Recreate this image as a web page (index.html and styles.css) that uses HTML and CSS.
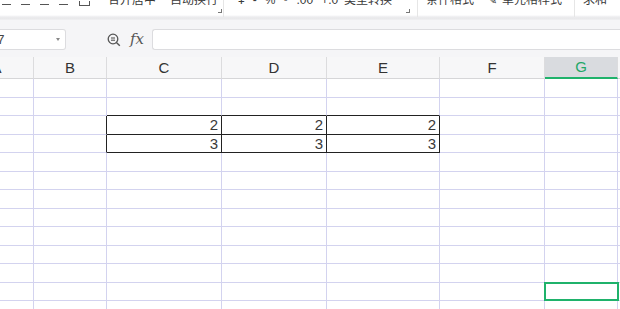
FILE: index.html
```html
<!DOCTYPE html>
<html lang="zh-CN">
<head>
    <meta charset="UTF-8">
    <title>表格</title>
    <link rel="stylesheet" href="styles.css">
</head>
<body>
    <!-- Ribbon (scrolled, only the bottom of it shows) -->
    <div class="ribbon">
        <div class="rb-group rb-align">
            <span class="bar"></span><span class="bar"></span><span class="bar"></span><span class="bar"></span>
            <span class="box-ico"></span>
        </div>
        <div class="rb-item w-merge">合并居中</div>
        <div class="rb-item w-wrap">自动换行<span class="corner"></span></div>
        <div class="rb-sep"></div>
        <div class="rb-item w-num"><span>¥</span><span>-</span><span>%</span><span>⁹</span><span>.00</span><span>+.0</span></div>
        <div class="rb-item w-conv">类型转换<span class="corner"></span></div>
        <div class="rb-sep"></div>
        <div class="rb-item w-cond">条件格式</div>
        <div class="rb-item w-style"><span class="brush">✎</span>单元格样式</div>
        <div class="rb-sep"></div>
        <div class="rb-item w-sum">求和</div>
    </div>

    <!-- Formula bar -->
    <div class="formula-bar">
        <div class="name-box">
            <span class="name-text">G27</span>
            <span class="caret"></span>
        </div>
        <div class="fb-tools">
            <svg class="zoom-ico" width="14" height="14" viewBox="0 0 14 14">
                <circle cx="6" cy="6" r="4.8" fill="none" stroke="#555" stroke-width="1.3"/>
                <line x1="9.4" y1="9.4" x2="12.8" y2="12.8" stroke="#555" stroke-width="1.4"/>
                <line x1="4" y1="5" x2="8" y2="5" stroke="#555" stroke-width="1.1"/>
                <line x1="4" y1="7.2" x2="8" y2="7.2" stroke="#555" stroke-width="1.1"/>
            </svg>
            <span class="fx">fx</span>
        </div>
        <div class="formula-input"></div>
    </div>

    <!-- Sheet -->
    <div class="sheet">
        <div class="hd">A</div><div class="hd">B</div><div class="hd">C</div><div class="hd">D</div><div class="hd">E</div><div class="hd">F</div><div class="hd sel">G</div><div class="hd"></div>

        <div class="c"></div><div class="c"></div><div class="c"></div><div class="c"></div><div class="c"></div><div class="c"></div><div class="c"></div><div class="c"></div>
        <div class="c"></div><div class="c"></div><div class="c bb"></div><div class="c bb"></div><div class="c bb"></div><div class="c"></div><div class="c"></div><div class="c"></div>
        <div class="c"></div><div class="c br"></div><div class="c box">2</div><div class="c box">2</div><div class="c box">2</div><div class="c"></div><div class="c"></div><div class="c"></div>
        <div class="c"></div><div class="c br"></div><div class="c box">3</div><div class="c box">3</div><div class="c box">3</div><div class="c"></div><div class="c"></div><div class="c"></div>
        <div class="c"></div><div class="c"></div><div class="c"></div><div class="c"></div><div class="c"></div><div class="c"></div><div class="c"></div><div class="c"></div>
        <div class="c"></div><div class="c"></div><div class="c"></div><div class="c"></div><div class="c"></div><div class="c"></div><div class="c"></div><div class="c"></div>
        <div class="c"></div><div class="c"></div><div class="c"></div><div class="c"></div><div class="c"></div><div class="c"></div><div class="c"></div><div class="c"></div>
        <div class="c"></div><div class="c"></div><div class="c"></div><div class="c"></div><div class="c"></div><div class="c"></div><div class="c"></div><div class="c"></div>
        <div class="c"></div><div class="c"></div><div class="c"></div><div class="c"></div><div class="c"></div><div class="c"></div><div class="c"></div><div class="c"></div>
        <div class="c"></div><div class="c"></div><div class="c"></div><div class="c"></div><div class="c"></div><div class="c"></div><div class="c"></div><div class="c"></div>
        <div class="c"></div><div class="c"></div><div class="c"></div><div class="c"></div><div class="c"></div><div class="c"></div><div class="c"></div><div class="c"></div>
        <div class="c"></div><div class="c"></div><div class="c"></div><div class="c"></div><div class="c"></div><div class="c"></div><div class="c active"></div><div class="c"></div>
        <div class="c"></div><div class="c"></div><div class="c"></div><div class="c"></div><div class="c"></div><div class="c"></div><div class="c"></div><div class="c"></div>
    </div>
</body>
</html>
```

FILE: styles.css
```css
* {
    box-sizing: border-box;
}

body {
    margin: 0;
    width: 620px;
    height: 309px;
    overflow: hidden;
    background: #ffffff;
    font-family: "Liberation Sans", "Noto Sans CJK SC", sans-serif;
    color: #333;
}

/* ribbon */
.ribbon {
    height: 20px;
    display: flex;
    align-items: flex-start;
    overflow: hidden;
    background: linear-gradient(#ffffff 0, #ffffff 15px, #ececee 17px, #e9e9eb 19px, #f3f3f5 20px);
}

.rb-group,
.rb-item {
    flex: none;
    margin-top: -6px;
    height: 12px;
    font-size: 12px;
    line-height: 12px;
    white-space: nowrap;
    position: relative;
    color: #3a3a3a;
}

.rb-align {
    display: flex;
    align-items: flex-end;
    gap: 10px;
    width: 108px;
    padding-left: 2px;
    margin-top: 0;
    height: 6px;
}

.bar {
    width: 9px;
    height: 1px;
    background: #555;
    margin-bottom: 1px;
}

.box-ico {
    width: 11px;
    height: 5px;
    border: 1px solid #555;
    border-top: none;
    margin-left: 1px;
}

.w-merge { width: 62px; }
.w-wrap { width: 52px; }
.w-num {
    width: 119px;
    padding-left: 13px;
    display: flex;
    gap: 8px;
    overflow: hidden;
}
.w-conv { width: 72px; }
.w-cond { width: 60px; padding-left: 7px; }
.w-style { width: 94px; padding-left: 9px; }
.w-sum { padding-left: 7px; }

.brush {
    font-size: 11px;
    margin-right: 5px;
}

.corner {
    position: absolute;
    right: 0;
    top: 15px;
    width: 4px;
    height: 4px;
    border-right: 1px solid #777;
    border-bottom: 1px solid #777;
}

.w-conv .corner { right: 6px; }

.rb-sep {
    flex: none;
    width: 1px;
    height: 17px;
    background: #e6e6e6;
    margin: 0 1px;
}

/* formula bar */
.formula-bar {
    height: 37px;
    background: #f5f5f7;
    display: flex;
    align-items: flex-start;
    padding-top: 9px;
}

.name-box {
    flex: none;
    width: 86px;
    height: 21px;
    margin-left: -20px;
    background: #fff;
    border: 1px solid #dcdcdf;
    border-left: none;
    border-radius: 0 3px 3px 0;
    display: flex;
    align-items: center;
    justify-content: space-between;
    padding: 0 4px 0 0;
    font-size: 13px;
    color: #444;
}

.caret {
    width: 0;
    height: 0;
    border-left: 2.5px solid transparent;
    border-right: 2.5px solid transparent;
    border-top: 3px solid #888;
    margin-right: 1px;
}

.fb-tools {
    flex: none;
    width: 86px;
    display: flex;
    align-items: center;
    gap: 9px;
    padding-left: 41px;
    height: 21px;
}

.fx {
    font-family: "DejaVu Serif", serif;
    font-style: italic;
    font-size: 15px;
    color: #555;
    margin-top: -2px;
}

.formula-input {
    flex: 1;
    height: 21px;
    background: #fff;
    border: 1px solid #dcdcdf;
    border-right: none;
    border-radius: 3px 0 0 3px;
}

/* sheet grid */
.sheet {
    display: grid;
    grid-template-columns: 74px 73px 115px 105px 113px 105px 73px 1fr;
    grid-template-rows: 22px repeat(13, 18.5px);
    margin-left: -40px;
}

.hd {
    background: #f7f7f8;
    border-right: 1px solid #dcdcde;
    border-bottom: 1px solid #d6d6d8;
    font-size: 15px;
    line-height: 21px;
    text-align: center;
    color: #333;
}

.hd.sel {
    background: #d9dbdf;
    color: #1fa868;
    border-bottom: 2px solid #1fb26b;
    line-height: 20px;
}

.c {
    border-right: 1px solid #d3d3ef;
    border-bottom: 1px solid #d3d3ef;
    font-size: 15px;
    line-height: 17px;
    text-align: right;
    padding-right: 3px;
    color: #3a3a3a;
}

.c.bb { border-bottom-color: #222; }
.c.br { border-right-color: #222; }
.c.box {
    border-right-color: #222;
    border-bottom-color: #222;
}

.c.active {
    position: relative;
}

.c.active::after {
    content: "";
    position: absolute;
    left: -1px;
    top: -1px;
    right: -2px;
    bottom: -1px;
    border: 2px solid #1fb26b;
}
```
